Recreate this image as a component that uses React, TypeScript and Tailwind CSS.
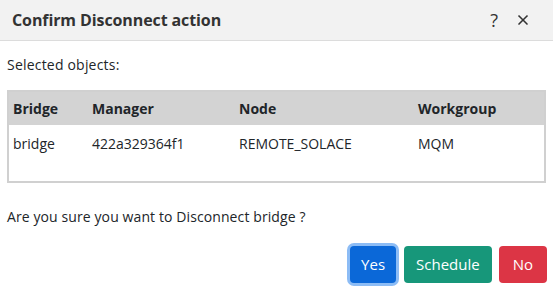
import { X } from "lucide-react";

interface BridgeRow {
  bridge: string;
  manager: string;
  node: string;
  workgroup: string;
}

const rows: BridgeRow[] = [
  { bridge: "bridge", manager: "422a329364f1", node: "REMOTE_SOLACE", workgroup: "MQM" },
];

export default function App() {
  return (
    <div
      className="w-[553px] h-[286px] bg-white text-[#212529] overflow-hidden"
      style={{ fontFamily: '"Open Sans", "Noto Sans", sans-serif' }}
    >
      <div className="h-[41px] bg-[#f2f2f2] border-b border-[#dcdcdc] flex items-center pl-3 pr-[22px]">
        <h1 className="text-[16px] font-bold text-[#333] tracking-[-0.1px] flex-1">Confirm Disconnect action</h1>
        <button className="text-[18px] text-[#333] mr-[17px] leading-none">?</button>
        <button className="text-[#333]">
          <X size={16} strokeWidth={2.5} />
        </button>
      </div>

      <div className="px-[7px] pt-[14px]">
        <p className="text-[14px] leading-5 tracking-[0.2px]">Selected objects:</p>

        <div className="mt-[15px] h-[93px] border-2 border-[#d0d0d0] w-[539px]">
          <table className="w-full border-collapse text-[14px]">
            <thead>
              <tr className="bg-[#d3d3d3] h-[33px] text-left">
                <th className="pl-[4px] w-[83px] font-bold">Bridge</th>
                <th className="w-[147px] font-bold">Manager</th>
                <th className="w-[179px] font-bold">Node</th>
                <th className="font-bold">Workgroup</th>
              </tr>
            </thead>
            <tbody>
              {rows.map((row) => (
                <tr key={row.manager} className="h-[37px]">
                  <td className="pl-[4px]">{row.bridge}</td>
                  <td>{row.manager}</td>
                  <td>{row.node}</td>
                  <td>{row.workgroup}</td>
                </tr>
              ))}
            </tbody>
          </table>
        </div>

        <p className="text-[14px] leading-5 mt-[24px] tracking-[0.1px]">Are you sure you want to Disconnect bridge ?</p>

        <div className="flex justify-end gap-[7px] mt-[19px]">
          <button className="h-[37px] px-[11px] rounded-[4px] bg-[#0b68d8] text-white text-[15px] ring-[3px] ring-[#8cbcf5] mr-[1px]">
            Yes
          </button>
          <button className="h-[37px] px-[12px] rounded-[4px] bg-[#17977a] text-white text-[15px]">
            Schedule
          </button>
          <button className="h-[37px] px-[14px] rounded-[4px] bg-[#dc3545] text-white text-[15px] mr-[-1px]">
            No
          </button>
        </div>
      </div>
    </div>
  );
}
